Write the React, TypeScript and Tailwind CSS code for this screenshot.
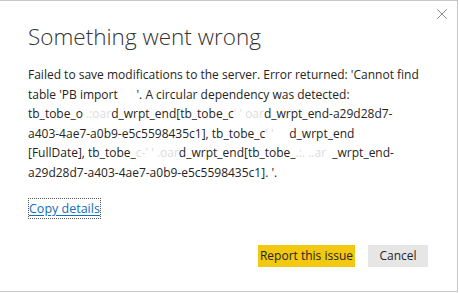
import { X } from 'lucide-react';

function Hidden({ children }: { children: string }) {
  // redacted part of the message, only faint traces remain
  return <span className="text-[#dcdcdc]">{children}</span>;
}

export default function App() {
  return (
    <div className="relative h-[292px] w-[458px] border-t border-r border-b border-[#c8c8c8] bg-white font-['Segoe_UI','Open_Sans',sans-serif] text-[#333333]">
      <button className="absolute right-[6px] top-[4px] flex h-[18px] w-[18px] items-center justify-center text-[#666666]" type="button">
        <X size={18} strokeWidth={1} />
      </button>

      <div className="pl-[28px] pr-[29px]">
        <h1 className="pt-[21px] text-[22.5px] font-light leading-[30px] text-[#333333]">Something went wrong</h1>

        <div className="mt-[13px] whitespace-pre text-[12px] leading-[19.6px] text-[#252423]">
          <div>Failed to save modifications to the server. Error returned: 'Cannot find</div>
          <div>
            table 'PB import{'      '}'. A circular dependency was detected:
          </div>
          <div>
            tb_tobe_o<Hidden>{' .:oar'}</Hidden>d_wrpt_end[tb_tobe_c<Hidden>{"' ' oar"}</Hidden>d_wrpt_end-a29d28d7-
          </div>
          <div>
            a403-4ae7-a0b9-e5c5598435c1], tb_tobe_c<Hidden>{"' '     "}</Hidden>d_wrpt_end
          </div>
          <div>
            [FullDate], tb_tobe_<Hidden>{"c-' ' .oar"}</Hidden>d_wrpt_end[tb_tobe_<Hidden>{'.:. ..ar  '}</Hidden>_wrpt_end-
          </div>
          <div>a29d28d7-a403-4ae7-a0b9-e5c5598435c1]. '.</div>
        </div>

        <div className="mt-[12px]">
          <a className="inline-block border border-dotted border-[#555555] text-[12.5px] leading-[19px] text-[#106ebe] underline underline-offset-2" href="#">
            Copy details
          </a>
        </div>

        <div className="mt-[26px] flex justify-end gap-[13px]">
          <button className="h-[22px] w-[97px] bg-[#f2c811] text-[12px] text-[#252423]" type="button">
            Report this issue
          </button>
          <button className="h-[22px] w-[60px] bg-[#e6e6e6] text-[12px] text-[#252423]" type="button">
            Cancel
          </button>
        </div>
      </div>
    </div>
  );
}
